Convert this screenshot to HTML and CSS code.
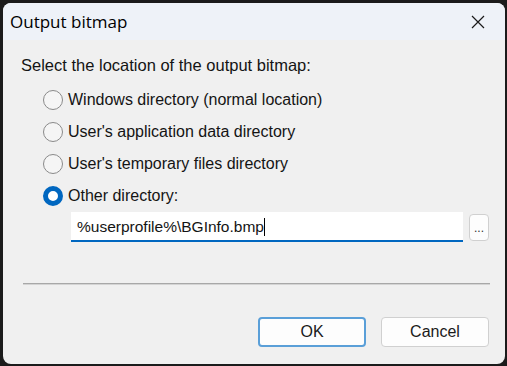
FILE: index.html
```html
<!DOCTYPE html>
<html>
<head>
<meta charset="utf-8">
<link rel="stylesheet" href="styles.css">
</head>
<body>
<div class="window">
  <div class="titlebar">
    <span class="title">Output bitmap</span>
    <svg class="close" width="14" height="14" viewBox="0 0 14 14"><path d="M1 1 L13 13 M13 1 L1 13" stroke="#1a1a1a" stroke-width="1.2" fill="none"/></svg>
  </div>
  <div class="body">
    <div class="prompt">Select the location of the output bitmap:</div>
    <div class="options">
      <div class="opt"><span class="radio"></span><span>Windows directory (normal location)</span></div>
      <div class="opt"><span class="radio"></span><span>User's application data directory</span></div>
      <div class="opt"><span class="radio"></span><span>User's temporary files directory</span></div>
      <div class="opt"><span class="radio checked"></span><span>Other directory:</span></div>
    </div>
    <div class="pathrow">
      <div class="input"><span>%userprofile%\BGInfo.bmp</span><span class="caret"></span></div>
      <div class="browse">...</div>
    </div>
    <div class="sep"></div>
    <div class="buttons">
      <div class="btn default">OK</div>
      <div class="btn">Cancel</div>
    </div>
  </div>
</div>
</body>
</html>
```
FILE: styles.css
```css
html, body {
  margin: 0;
  padding: 0;
  background: #1b1b1b;
  width: 507px;
  height: 366px;
  overflow: hidden;
}
body {
  padding: 3px 2px 2px 3px;
  box-sizing: border-box;
}
.window {
  width: 502px;
  height: 361px;
  border-radius: 8px;
  overflow: hidden;
  background: #f0f0f0;
  display: flex;
  flex-direction: column;
  font-family: "Liberation Sans", Arial, sans-serif;
  color: #000;
}
.titlebar {
  height: 37px;
  background: #eef2f8;
  display: flex;
  align-items: center;
  justify-content: space-between;
  padding: 0 20px 0 7px;
  flex: none;
}
.title {
  font-family: "Open Sans", "Noto Sans", sans-serif;
  font-size: 17px;
  color: #000;
}
.close { display: block; }
.body {
  flex: 1;
  display: flex;
  flex-direction: column;
  padding: 16px 15px 0 18px;
  font-size: 16.5px;
  color: #141414;
}
.prompt {
  line-height: 19px;
}
.options {
  display: flex;
  flex-direction: column;
  gap: 12px;
  margin-top: 15px;
  padding-left: 22px;
  font-size: 16px;
}
.opt {
  display: flex;
  align-items: center;
  gap: 5px;
  height: 20px;
  line-height: 20px;
}
.radio {
  width: 20px;
  height: 20px;
  border: 1px solid #8a8a8a;
  border-radius: 50%;
  background: #f5f5f5;
  box-sizing: border-box;
  flex: none;
}
.radio.checked {
  border: 5.5px solid #0067c0;
  background: #fff;
}
.pathrow {
  display: flex;
  align-items: center;
  gap: 6px;
  margin-top: 6px;
  padding-left: 50px;
}
.input {
  width: 392px;
  height: 30px;
  box-sizing: border-box;
  background: #fff;
  border-bottom: 2px solid #0067c0;
  display: flex;
  align-items: center;
  padding-left: 6px;
  padding-top: 2px;
  font-size: 15.5px;
}
.caret {
  width: 1px;
  height: 18px;
  background: #000;
}
.browse {
  width: 20px;
  height: 27px;
  box-sizing: border-box;
  border: 1px solid #d0d0d0;
  border-radius: 4px;
  background: #fdfdfd;
  font-size: 12px;
  display: flex;
  align-items: flex-end;
  justify-content: center;
  padding-bottom: 5px;
  color: #333;
}
.sep {
  height: 1px;
  background: #a8a8a8;
  border-bottom: 1px solid #d4d4d4;
  margin-top: 41px;
  margin-left: 2px;
}
.buttons {
  display: flex;
  justify-content: flex-end;
  gap: 15px;
  margin-top: 32px;
  padding-right: 1px;
}
.btn {
  width: 108px;
  height: 30px;
  box-sizing: border-box;
  border: 1px solid #d0d0d0;
  border-radius: 4px;
  background: #fdfdfd;
  display: flex;
  align-items: center;
  justify-content: center;
  font-size: 16px;
  color: #1a1a1a;
}
.btn.default {
  border: 2px solid #5a9fd8;
}
```
